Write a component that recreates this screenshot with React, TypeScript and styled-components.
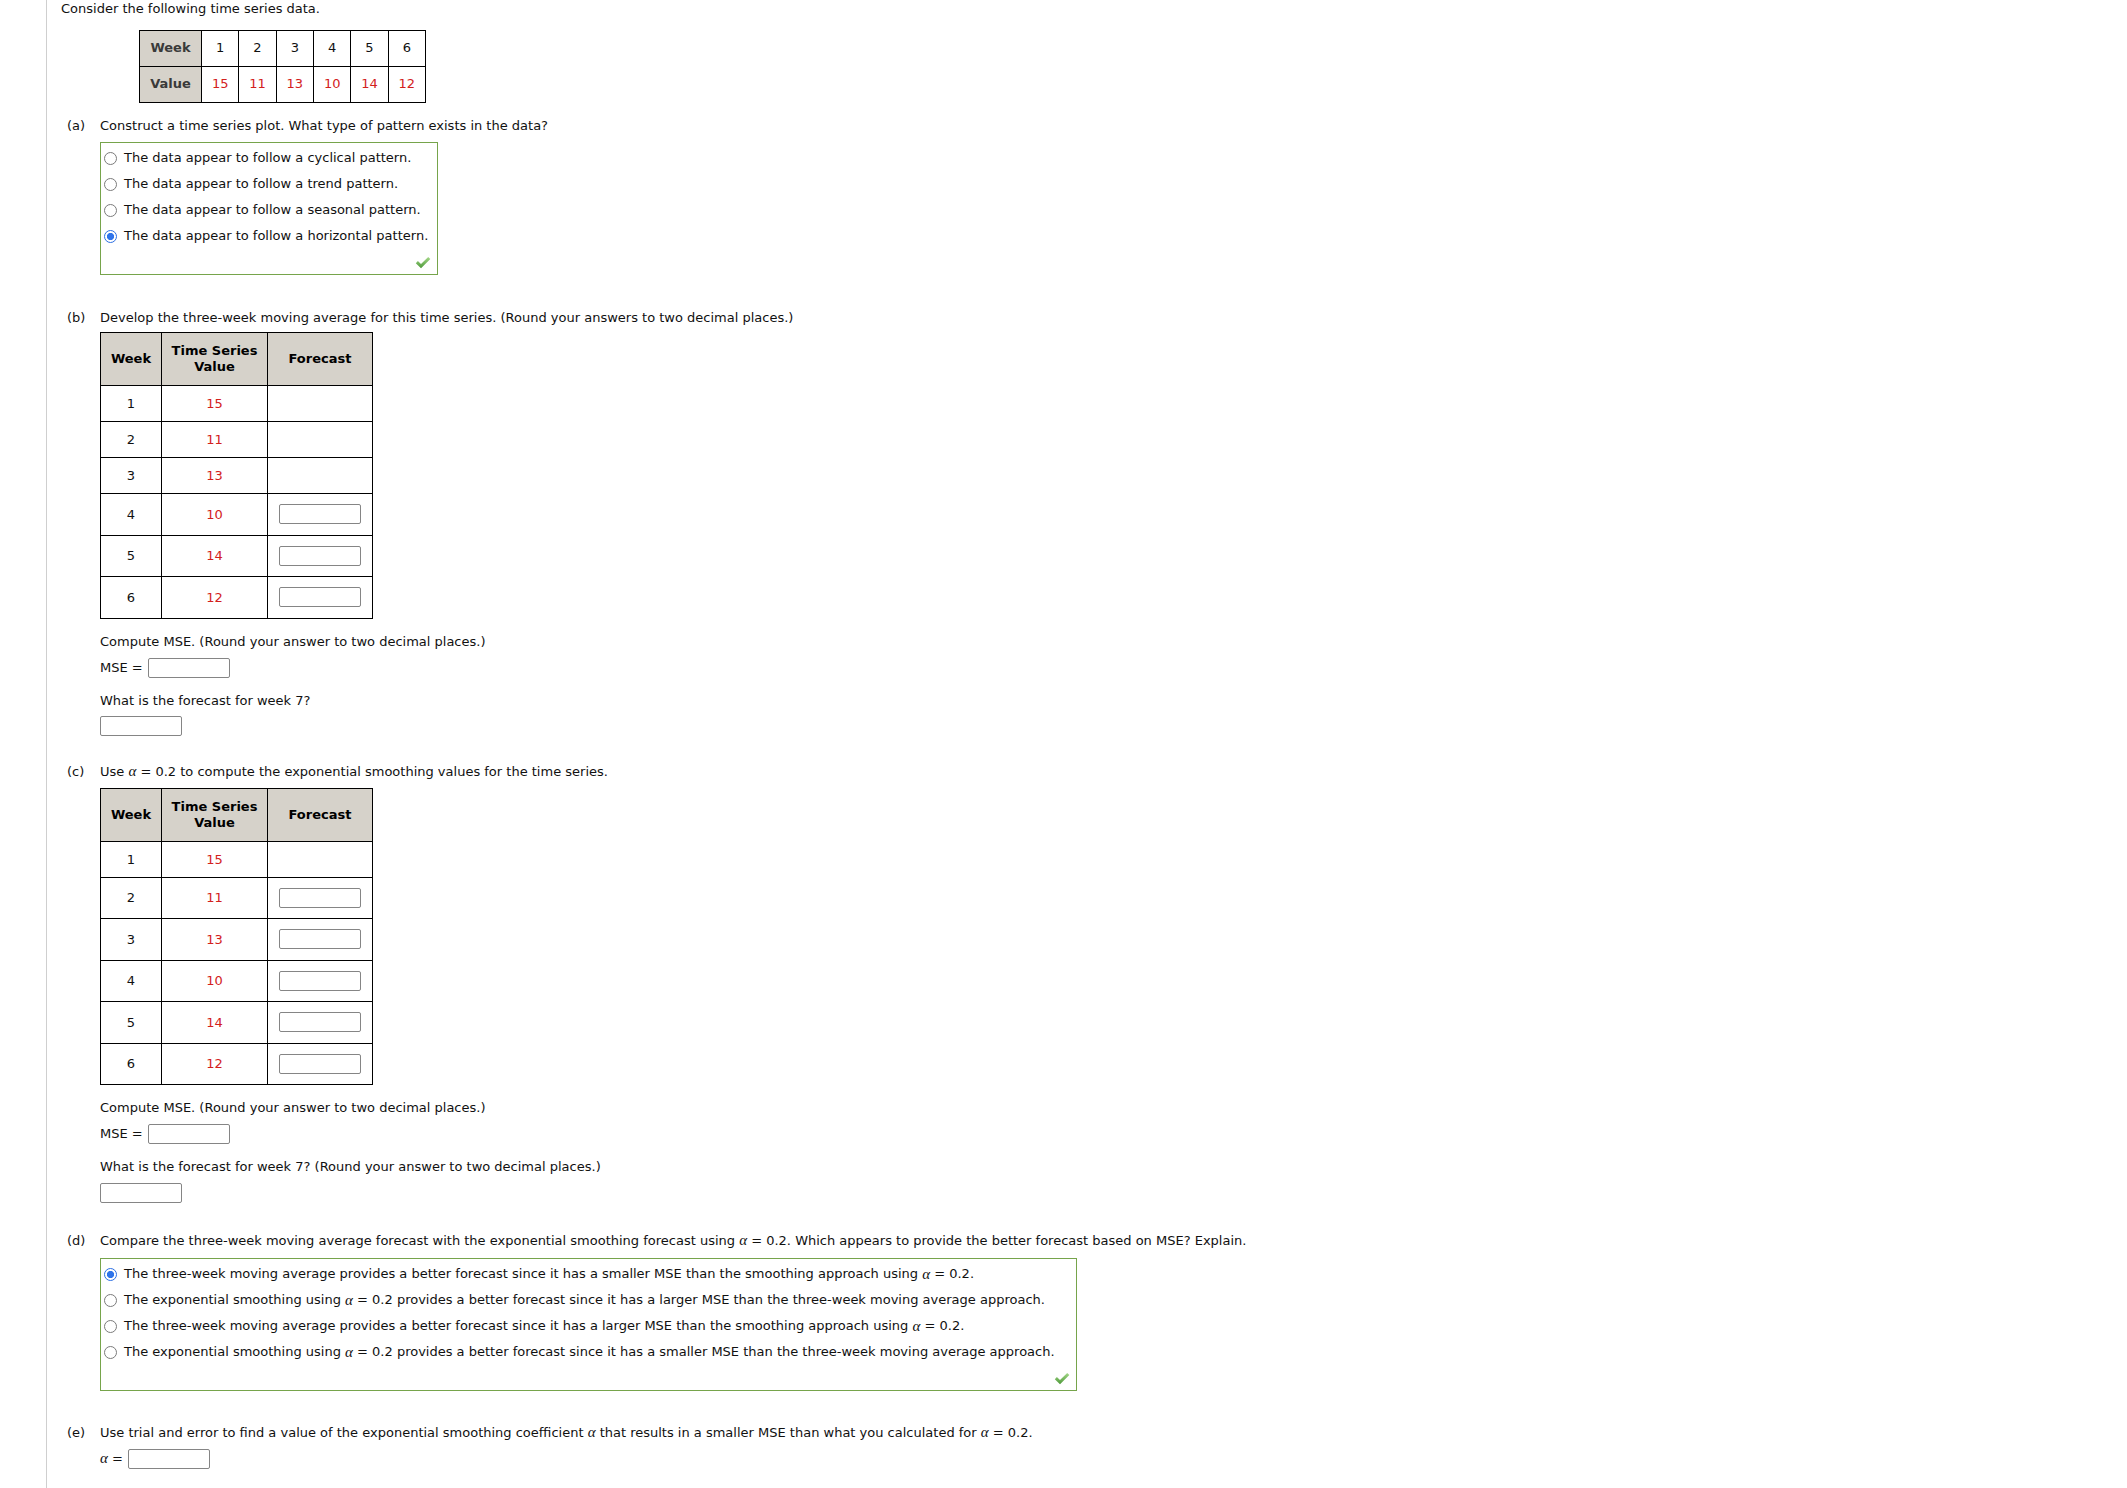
import React from "react";
import styled, { createGlobalStyle } from "styled-components";

const GlobalStyle = createGlobalStyle`
  html, body { margin: 0; padding: 0; background: #ffffff; }
  body {
    font-family: "DejaVu Sans", Verdana, sans-serif;
    font-size: 13px;
    line-height: 16px;
    color: #111111;
  }
`;

const Page = styled.div`
  margin-left: 46px;
  border-left: 1px solid #cfcfcf;
  padding-left: 14px;
  padding-top: 1px;
  min-height: 100vh;
  box-sizing: border-box;
`;

const Line = styled.div<{ $top?: number }>`
  margin-top: ${(p) => p.$top ?? 0}px;
  line-height: 16px;
  white-space: nowrap;
`;

const Red = styled.span`
  color: #d3211c;
`;

const Alpha = styled.i`
  font-family: "Liberation Serif", "DejaVu Serif", serif;
  font-size: 15px;
  line-height: 0;
`;

/* ---------- week/value data table ---------- */
const DataTable = styled.table`
  margin: 13px 0 0 78px;
  border-collapse: collapse;
  table-layout: fixed;
  width: 287px;
  border: 1px solid #000;
`;

const DataHead = styled.th`
  width: 62px;
  box-sizing: border-box;
  background: #d6d2ca;
  color: #3a3a3a;
  font-weight: bold;
  border: 1px solid #000;
  padding: 9px 4px 10px;
  text-align: center;
`;

const DataCell = styled.td`
  border: 1px solid #000;
  padding: 9px 2px 10px;
  text-align: center;
`;

/* ---------- parts ---------- */
const Part = styled.section<{ $top: number }>`
  display: grid;
  grid-template-columns: 39px auto;
  margin-top: ${(p) => p.$top}px;
`;

const PartLabel = styled.div`
  padding-left: 6px;
  line-height: 16px;
`;

const PartBody = styled.div`
  display: flex;
  flex-direction: column;
  align-items: flex-start;
`;

/* ---------- answer box ---------- */
const AnswerBox = styled.div<{ $top: number; $w: number }>`
  margin-top: ${(p) => p.$top}px;
  width: ${(p) => p.$w}px;
  box-sizing: border-box;
  border: 1px solid #76a44b;
  padding: 2px 6px 2px 0;
  display: flex;
  flex-direction: column;
`;

const Option = styled.label`
  display: flex;
  align-items: center;
  height: 26px;
  white-space: nowrap;
`;

const Radio = styled.input.attrs({ type: "radio" })`
  appearance: none;
  -webkit-appearance: none;
  width: 13px;
  height: 13px;
  margin: 0 7px 0 3px;
  box-sizing: border-box;
  border-radius: 50%;
  border: 1px solid #7b7b7b;
  background: #fff;
  flex: none;
  &:checked {
    border: 1.5px solid #2c6fe3;
    background: radial-gradient(circle, #2f74ea 0 3.3px, #ffffff 3.9px);
  }
`;

const CheckRow = styled.div`
  margin-top: 3px;
  height: 20px;
  display: flex;
  align-items: center;
  justify-content: flex-end;
`;

/* ---------- grid table ---------- */
const GridTable = styled.table<{ $top: number }>`
  margin-top: ${(p) => p.$top}px;
  border-collapse: collapse;
  table-layout: fixed;
  width: 272px;
  border: 1px solid #000;
`;

const Col = styled.col<{ $w: number }>`
  width: ${(p) => p.$w}px;
`;

const Head = styled.th`
  background: #d6d2ca;
  color: #000;
  font-weight: bold;
  border: 1px solid #000;
  padding: 10px 4px;
  line-height: 16px;
  text-align: center;
  vertical-align: middle;
`;

const Cell = styled.td`
  border: 1px solid #000;
  padding: 10px 4px 9px;
  line-height: 16px;
  text-align: center;
  vertical-align: middle;
`;

const InputCell = styled.td`
  border: 1px solid #000;
  padding: 10px 4px 10.5px;
  text-align: center;
  vertical-align: middle;
`;

const TextInput = styled.input.attrs({ type: "text" })`
  display: block;
  width: 82px;
  height: 20px;
  box-sizing: border-box;
  margin: 0;
  border: 1px solid #858585;
  border-radius: 2px;
  background: #fff;
  padding: 0 3px;
  font: inherit;
`;

const CenteredInput = styled(TextInput)`
  margin: 0 auto;
`;

const InputRow = styled.div<{ $top: number }>`
  margin-top: ${(p) => p.$top}px;
  display: flex;
  align-items: center;
  gap: 5px;
  height: 20px;
`;

const CheckMark: React.FC<{ id: string }> = ({ id }) => (
  <svg width="16" height="13" viewBox="0 0 16 13" aria-hidden="true">
    <defs>
      <linearGradient id={id} x1="0" y1="0" x2="0" y2="1">
        <stop offset="0" stopColor="#a6d98a" />
        <stop offset="1" stopColor="#4c9838" />
      </linearGradient>
    </defs>
    <path d="M0.8 7.2 L2.9 5.1 L6 8.1 L13.2 0.9 L15.3 3 L6 12.3 Z" fill={`url(#${id})`} />
  </svg>
);

const weeks = [1, 2, 3, 4, 5, 6];
const values = [15, 11, 13, 10, 14, 12];

const SeriesTable: React.FC<{ top: number; inputFrom: number }> = ({ top, inputFrom }) => (
  <GridTable $top={top}>
    <colgroup>
      <Col $w={61} />
      <Col $w={106} />
      <Col $w={105} />
    </colgroup>
    <thead>
      <tr>
        <Head>Week</Head>
        <Head>
          Time Series
          <br />
          Value
        </Head>
        <Head>Forecast</Head>
      </tr>
    </thead>
    <tbody>
      {weeks.map((w, i) => (
        <tr key={w}>
          <Cell>{w}</Cell>
          <Cell>
            <Red>{values[i]}</Red>
          </Cell>
          {w >= inputFrom ? (
            <InputCell>
              <CenteredInput />
            </InputCell>
          ) : (
            <Cell />
          )}
        </tr>
      ))}
    </tbody>
  </GridTable>
);

const App: React.FC = () => (
  <>
    <GlobalStyle />
    <Page>
      <Line>Consider the following time series data.</Line>
      <DataTable>
        <tbody>
          <tr>
            <DataHead>Week</DataHead>
            {weeks.map((w) => (
              <DataCell key={w}>{w}</DataCell>
            ))}
          </tr>
          <tr>
            <DataHead>Value</DataHead>
            {values.map((v, i) => (
              <DataCell key={i}>
                <Red>{v}</Red>
              </DataCell>
            ))}
          </tr>
        </tbody>
      </DataTable>

      <Part $top={15}>
        <PartLabel>(a)</PartLabel>
        <PartBody>
          <Line>Construct a time series plot. What type of pattern exists in the data?</Line>
          <AnswerBox $top={8} $w={338}>
            <Option>
              <Radio name="pa" />
              The data appear to follow a cyclical pattern.
            </Option>
            <Option>
              <Radio name="pa" />
              The data appear to follow a trend pattern.
            </Option>
            <Option>
              <Radio name="pa" />
              The data appear to follow a seasonal pattern.
            </Option>
            <Option>
              <Radio name="pa" defaultChecked />
              The data appear to follow a horizontal pattern.
            </Option>
            <CheckRow>
              <CheckMark id="chk-a" />
            </CheckRow>
          </AnswerBox>
        </PartBody>
      </Part>

      <Part $top={35}>
        <PartLabel>(b)</PartLabel>
        <PartBody>
          <Line>
            Develop the three-week moving average for this time series. (Round your answers to two
            decimal places.)
          </Line>
          <SeriesTable top={6} inputFrom={4} />
          <Line $top={15}>Compute MSE. (Round your answer to two decimal places.)</Line>
          <InputRow $top={8}>
            MSE =
            <TextInput />
          </InputRow>
          <Line $top={15}>What is the forecast for week 7?</Line>
          <InputRow $top={7}>
            <TextInput />
          </InputRow>
        </PartBody>
      </Part>

      <Part $top={28}>
        <PartLabel>(c)</PartLabel>
        <PartBody>
          <Line>
            Use <Alpha>α</Alpha> = 0.2 to compute the exponential smoothing values for the time
            series.
          </Line>
          <SeriesTable top={8} inputFrom={2} />
          <Line $top={15}>Compute MSE. (Round your answer to two decimal places.)</Line>
          <InputRow $top={8}>
            MSE =
            <TextInput />
          </InputRow>
          <Line $top={15}>What is the forecast for week 7? (Round your answer to two decimal places.)</Line>
          <InputRow $top={8}>
            <TextInput />
          </InputRow>
        </PartBody>
      </Part>

      <Part $top={30}>
        <PartLabel>(d)</PartLabel>
        <PartBody>
          <Line>
            Compare the three-week moving average forecast with the exponential smoothing forecast
            using <Alpha>α</Alpha> = 0.2. Which appears to provide the better forecast based on MSE?
            Explain.
          </Line>
          <AnswerBox $top={9} $w={977}>
            <Option>
              <Radio name="pd" defaultChecked />
              The three-week moving average provides a better forecast since it has a smaller MSE
              than the smoothing approach using&nbsp;<Alpha>α</Alpha>&nbsp;= 0.2.
            </Option>
            <Option>
              <Radio name="pd" />
              The exponential smoothing using&nbsp;<Alpha>α</Alpha>&nbsp;= 0.2 provides a better
              forecast since it has a larger MSE than the three-week moving average approach.
            </Option>
            <Option>
              <Radio name="pd" />
              The three-week moving average provides a better forecast since it has a larger MSE
              than the smoothing approach using&nbsp;<Alpha>α</Alpha>&nbsp;= 0.2.
            </Option>
            <Option>
              <Radio name="pd" />
              The exponential smoothing using&nbsp;<Alpha>α</Alpha>&nbsp;= 0.2 provides a better
              forecast since it has a smaller MSE than the three-week moving average approach.
            </Option>
            <CheckRow>
              <CheckMark id="chk-d" />
            </CheckRow>
          </AnswerBox>
        </PartBody>
      </Part>

      <Part $top={34}>
        <PartLabel>(e)</PartLabel>
        <PartBody>
          <Line>
            Use trial and error to find a value of the exponential smoothing coefficient{" "}
            <Alpha>α</Alpha> that results in a smaller MSE than what you calculated for{" "}
            <Alpha>α</Alpha> = 0.2.
          </Line>
          <InputRow $top={8}>
            <span>
              <Alpha>α</Alpha> =
            </span>
            <TextInput />
          </InputRow>
        </PartBody>
      </Part>
    </Page>
  </>
);

export default App;
